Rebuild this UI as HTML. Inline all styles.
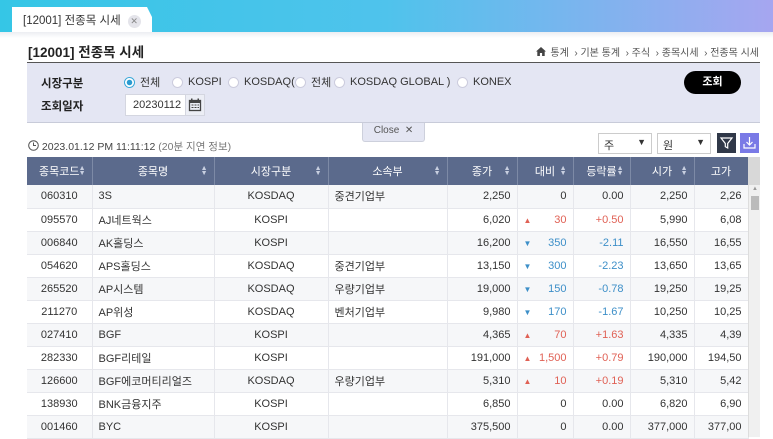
<!DOCTYPE html>
<html><head><meta charset="utf-8"><style>
*{margin:0;padding:0;box-sizing:border-box}
body{width:773px;height:437px;overflow:hidden;background:#fff;font-family:"Liberation Sans","Noto Sans CJK KR",sans-serif;font-size:11px;color:#222;position:relative}
.top{position:absolute;left:0;top:0;width:773px;height:32px;background:linear-gradient(90deg,#35c6e6 0%,#4fc3ec 50%,#a6a6f0 100%)}
.tab{position:absolute;left:12px;top:7px;width:140px;height:26px;background:#fff;clip-path:polygon(0 0,135px 0,148px 26px,0 26px);font-size:11.5px;padding:5px 0 0 11px;color:#333}
.tab .x{display:inline-block;width:13px;height:13px;border-radius:50%;background:#e4e4ea;color:#888;font-size:9px;text-align:center;line-height:13px;margin-left:7px}
.shadow{position:absolute;left:0;top:32px;width:773px;height:6px;background:linear-gradient(#eceef2,#fff)}
.title{position:absolute;left:28px;top:41px;font-size:13.5px;font-weight:bold;color:#222}
.crumb{position:absolute;right:14px;top:44px;font-size:10px;color:#555;display:flex;align-items:center;gap:4px}
.line{position:absolute;left:27px;top:62px;width:733px;height:1px;background:#555}
.filter{position:absolute;left:27px;top:63px;width:733px;height:60px;background:#e4e6f3;border-bottom:1px solid #c8cbd9}
.lbl{position:absolute;font-weight:bold;font-size:11.5px;color:#222}
.r{position:absolute;top:12px;height:14px;font-size:11px;color:#333;white-space:nowrap;display:flex;align-items:center}
.rad{display:inline-block;width:11px;height:11px;border-radius:50%;background:#fff;border:1px solid #ccd;margin-right:5px;flex:none}
.rad.on{border-color:#3aa8d8;background:radial-gradient(#2b9bd0 0 2.5px,#fff 3px)}
.date{position:absolute;left:98px;top:31px;width:80px;height:22px;background:#fff;border:1px solid #d4d6e0;padding:4px 0 0 7px;font-size:11px;color:#333}
.cal{position:absolute;left:158px;top:31px;width:20px;height:22px;background:#eceef5;border:1px solid #d4d6e0}
.btn{position:absolute;left:657px;top:8px;width:57px;height:23px;border-radius:12px;background:#000;color:#fff;font-weight:bold;text-align:center;line-height:23px;font-size:11px}
.close{position:absolute;left:362px;top:123px;width:63px;height:19px;background:#e4e6f3;border:1px solid #cdd0dc;border-top:none;border-radius:0 0 3px 3px;font-size:10px;color:#555;text-align:center;line-height:16px}
.time{position:absolute;left:28px;top:139px;font-size:10.5px;color:#444}
.time span{color:#777}
.sel{position:absolute;top:133px;height:21px;border:1px solid #ccc;background:#fff;font-size:11px;padding:3px 0 0 5px;color:#333}
.sel b{position:absolute;right:5px;top:3px;font-size:9px}
.ib{position:absolute;top:133px;width:19px;height:20px}
table{position:absolute;left:27px;top:157px;border-collapse:collapse;table-layout:fixed;width:721px}
th{background:#5b6a8c;color:#fff;font-weight:normal;height:28px;border-right:1px solid #7d8aa6;font-size:11px;position:relative}
th i{position:absolute;right:6px;top:9px;font-style:normal;font-size:7px;color:#c8cfe0;line-height:5px}
td{height:23px;border-bottom:1px solid #e6e7ec;border-right:1px solid #e6e7ec;padding:0 6px;white-space:nowrap;overflow:hidden;font-size:11px;color:#333}
tr:nth-child(even) td{background:#f6f7f9}
.c{text-align:center}.n{text-align:right}
.up{color:#e06155}.dn{color:#3d8fc8}
.a{font-size:8px;float:left;margin-top:2px}
.sb{position:absolute;left:748px;top:185px;width:12px;height:252px;background:#f0f0f0;border-left:1px solid #ddd}
.sb div{position:absolute;left:2px;top:11px;width:8px;height:14px;background:#bbb}
.sb span{position:absolute;left:3px;top:1px;font-size:6px;color:#999}
.hscrl{position:absolute;left:748px;top:157px;width:12px;height:28px;background:#d8d8d8}
</style></head><body>
<div class="top"></div>
<div class="tab">[12001] 전종목 시세<span class="x">✕</span></div>
<div class="shadow"></div>
<div class="title">[12001] 전종목 시세</div>
<div class="crumb"><svg width="10" height="9" viewBox="0 0 10 9"><path d="M5 0L0 4.5h1.3V9h2.6V6h2.2v3h2.6V4.5H10z" fill="#444"/></svg> 통계 &nbsp;› 기본 통계 &nbsp;› 주식 &nbsp;› 종목시세 &nbsp;› 전종목 시세</div>
<div class="line"></div>
<div class="filter">
<div class="lbl" style="left:14px;top:12px">시장구분</div>
<div class="lbl" style="left:14px;top:35px">조회일자</div>
<div class="r" style="left:97px"><span class="rad on"></span>전체</div>
<div class="r" style="left:145px"><span class="rad"></span>KOSPI</div>
<div class="r" style="left:201px"><span class="rad"></span>KOSDAQ(</div>
<div class="r" style="left:268px"><span class="rad"></span>전체</div>
<div class="r" style="left:307px"><span class="rad"></span>KOSDAQ GLOBAL )</div>
<div class="r" style="left:430px"><span class="rad"></span>KONEX</div>
<div class="date">20230112</div>
<div class="cal"><svg width="18" height="20" viewBox="0 0 18 20"><rect x="3.5" y="5.5" width="11" height="10" fill="none" stroke="#444" stroke-width="1.3"/><rect x="3.5" y="5.5" width="11" height="2.5" fill="#444"/><rect x="5" y="3.5" width="1.5" height="3" fill="#444"/><rect x="11.5" y="3.5" width="1.5" height="3" fill="#444"/><path d="M5.5 10h2M8.5 10h2M11.5 10h1.5M5.5 12.5h2M8.5 12.5h2M11.5 12.5h1.5" stroke="#444"/></svg></div>
<div class="btn">조회</div>
</div>
<div class="close">Close &nbsp;✕</div>
<div class="time"><svg width="11" height="11" viewBox="0 0 11 11" style="vertical-align:-1px"><circle cx="5.5" cy="5.5" r="4.8" fill="none" stroke="#555"/><path d="M5.5 2.5v3h2.5" fill="none" stroke="#555"/></svg> 2023.01.12 PM 11:11:12 <span>(20분 지연 정보)</span></div>
<div class="sel" style="left:598px;width:54px">주<b>▼</b></div>
<div class="sel" style="left:657px;width:54px">원<b>▼</b></div>
<div class="ib" style="left:717px;background:#303848"><svg width="19" height="20"><path d="M4 5h11l-4.3 5.5v4.5l-2.4-1.4v-3.1z" fill="none" stroke="#fff" stroke-width="1.2"/></svg></div>
<div class="ib" style="left:740px;background:#7a7ae6"><svg width="19" height="20"><path d="M9.5 4v8M6.5 9l3 3 3-3M4 11v4h11v-4" fill="none" stroke="#fff" stroke-width="1.2"/></svg></div>
<table>
<colgroup><col style="width:65px"><col style="width:122px"><col style="width:114px"><col style="width:119px"><col style="width:70px"><col style="width:56px"><col style="width:57px"><col style="width:64px"><col style="width:54px"></colgroup>
<tr><th>종목코드<i>▲<br>▼</i></th><th>종목명<i>▲<br>▼</i></th><th>시장구분<i>▲<br>▼</i></th><th>소속부<i>▲<br>▼</i></th><th>종가<i>▲<br>▼</i></th><th>대비<i>▲<br>▼</i></th><th>등락률<i>▲<br>▼</i></th><th>시가<i>▲<br>▼</i></th><th>고가</th></tr>
<tr><td class="c">060310</td><td>3S</td><td class="c">KOSDAQ</td><td>중견기업부</td><td class="n">2,250</td><td class="n">0</td><td class="n">0.00</td><td class="n">2,250</td><td class="n">2,26</td></tr>
<tr><td class="c">095570</td><td>AJ네트웍스</td><td class="c">KOSPI</td><td></td><td class="n">6,020</td><td class="n up"><span class="a">▲</span>30</td><td class="n up">+0.50</td><td class="n">5,990</td><td class="n">6,08</td></tr>
<tr><td class="c">006840</td><td>AK홀딩스</td><td class="c">KOSPI</td><td></td><td class="n">16,200</td><td class="n dn"><span class="a">▼</span>350</td><td class="n dn">-2.11</td><td class="n">16,550</td><td class="n">16,55</td></tr>
<tr><td class="c">054620</td><td>APS홀딩스</td><td class="c">KOSDAQ</td><td>중견기업부</td><td class="n">13,150</td><td class="n dn"><span class="a">▼</span>300</td><td class="n dn">-2.23</td><td class="n">13,650</td><td class="n">13,65</td></tr>
<tr><td class="c">265520</td><td>AP시스템</td><td class="c">KOSDAQ</td><td>우량기업부</td><td class="n">19,000</td><td class="n dn"><span class="a">▼</span>150</td><td class="n dn">-0.78</td><td class="n">19,250</td><td class="n">19,25</td></tr>
<tr><td class="c">211270</td><td>AP위성</td><td class="c">KOSDAQ</td><td>벤처기업부</td><td class="n">9,980</td><td class="n dn"><span class="a">▼</span>170</td><td class="n dn">-1.67</td><td class="n">10,250</td><td class="n">10,25</td></tr>
<tr><td class="c">027410</td><td>BGF</td><td class="c">KOSPI</td><td></td><td class="n">4,365</td><td class="n up"><span class="a">▲</span>70</td><td class="n up">+1.63</td><td class="n">4,335</td><td class="n">4,39</td></tr>
<tr><td class="c">282330</td><td>BGF리테일</td><td class="c">KOSPI</td><td></td><td class="n">191,000</td><td class="n up"><span class="a">▲</span>1,500</td><td class="n up">+0.79</td><td class="n">190,000</td><td class="n">194,50</td></tr>
<tr><td class="c">126600</td><td>BGF에코머티리얼즈</td><td class="c">KOSDAQ</td><td>우량기업부</td><td class="n">5,310</td><td class="n up"><span class="a">▲</span>10</td><td class="n up">+0.19</td><td class="n">5,310</td><td class="n">5,42</td></tr>
<tr><td class="c">138930</td><td>BNK금융지주</td><td class="c">KOSPI</td><td></td><td class="n">6,850</td><td class="n">0</td><td class="n">0.00</td><td class="n">6,820</td><td class="n">6,90</td></tr>
<tr><td class="c">001460</td><td>BYC</td><td class="c">KOSPI</td><td></td><td class="n">375,500</td><td class="n">0</td><td class="n">0.00</td><td class="n">377,000</td><td class="n">377,00</td></tr>
</table>
<div class="hscrl"></div>
<div class="sb"><span>▲</span><div></div></div>
</body></html>
